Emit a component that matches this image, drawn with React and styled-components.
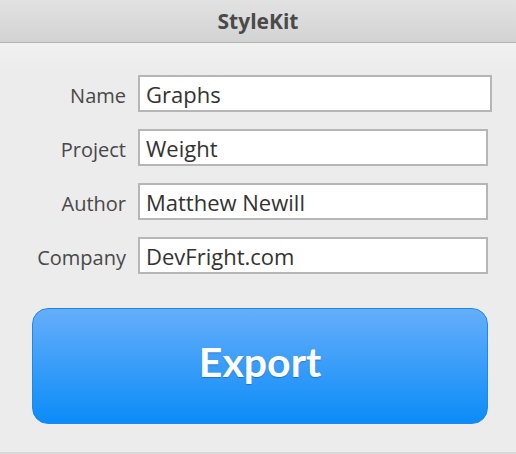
import React from "react";
import styled, { createGlobalStyle } from "styled-components";

const fields = [
  { label: "Name", value: "Graphs", width: 354 },
  { label: "Project", value: "Weight", width: 350 },
  { label: "Author", value: "Matthew Newill", width: 350 },
  { label: "Company", value: "DevFright.com", width: 350 },
];

const App = () => {
  return (
    <>
      <GlobalStyle />
      <Window>
        <TitleBar>StyleKit</TitleBar>
        <Body>
          <Form>
            {fields.map((f) => (
              <Row key={f.label}>
                <Label>{f.label}</Label>
                <Field $w={f.width} defaultValue={f.value} />
              </Row>
            ))}
          </Form>
          <ExportButton>Export</ExportButton>
        </Body>
      </Window>
    </>
  );
};
export default App;

const GlobalStyle = createGlobalStyle`
body{
  margin:0;
  background:#ececec;
  font-family:"Open Sans", "Liberation Sans", sans-serif;
}
`;

const Window = styled.div`
width:516px;
height:454px;
display:flex;
flex-direction:column;
background:#ececec;
`;

const TitleBar = styled.div`
height:42px;
display:flex;
align-items:center;
justify-content:center;
background:linear-gradient(#e2e2e2, #d3d3d3);
border-bottom:1px solid #b3b3b3;
font-family:"Open Sans", sans-serif;
font-weight:700;
font-size:21px;
color:#4a4a4a;
`;

const Body = styled.div`
flex:1;
display:flex;
flex-direction:column;
padding-top:32px;
background:linear-gradient(#f1f1f1, #ececec 30px);
border-bottom:2px solid #d9d9d9;
`;

const Form = styled.div`
display:flex;
flex-direction:column;
gap:17px;
`;

const Row = styled.div`
display:flex;
align-items:center;
gap:12px;
`;

const Label = styled.label`
width:126px;
padding-top:3px;
text-align:right;
font-size:20px;
color:#484848;
`;

const Field = styled.input`
width:${(p) => p.$w}px;
height:37px;
box-sizing:border-box;
border:2px solid #b6b6b6;
background:#fff;
padding:0 6px;
font-family:"Open Sans", sans-serif;
font-size:22px;
color:#333;
outline:none;
`;

const ExportButton = styled.button`
margin:34px 0 0 32px;
width:456px;
height:116px;
padding-bottom:10px;
border:1px solid #1b88ef;
border-radius:16px;
background:linear-gradient(#66aefa, #0b8cf8);
color:#fff;
font-family:Lato, sans-serif;
font-weight:700;
font-size:41px;
text-shadow:0 1px 1px rgba(0,60,140,0.4);
cursor:pointer;
`;
